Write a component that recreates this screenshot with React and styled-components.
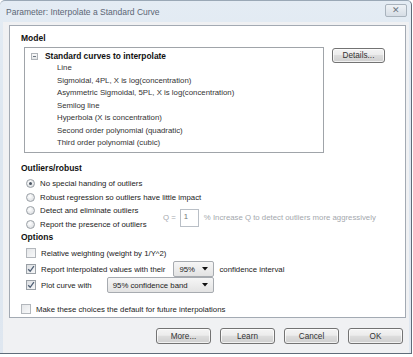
import styled, { createGlobalStyle } from 'styled-components'

const GlobalStyle = createGlobalStyle`
  html, body { margin: 0; padding: 0; background: #ffffff; }
  body { font-family: "Liberation Sans", Arial, sans-serif; }
`

const Window = styled.div`
  width: 412px;
  height: 354px;
  box-sizing: border-box;
  display: flex;
  flex-direction: column;
  background: linear-gradient(180deg, #e4ecf4 0%, #dbe5ef 40%, #dfe7f0 100%);
  border-top: 1px solid #9aa8b6;
  border-right: 1px solid #5f6c79;
  border-bottom: 1px solid #5f6c79;
  border-radius: 5px 5px 0 0;
`

const TitleBar = styled.div`
  height: 21px;
  display: flex;
  align-items: center;
  justify-content: space-between;
  padding: 0 4px 0 6px;
  font-size: 8.5px;
  color: #5b6675;
`

const CloseBtn = styled.div`
  width: 20px;
  height: 11px;
  margin-top: -2px;
  border: 1px solid #a9b3bd;
  border-radius: 2px;
  background: linear-gradient(180deg, #eef2f6, #d6dde5);
  display: flex;
  align-items: center;
  justify-content: center;
  color: #6b7580;
  font-size: 9px;
  line-height: 1;
`

const Client = styled.div`
  flex: 1;
  margin: 0 2px 0 3px;
  padding: 3px 3px 0 6px;
  background: #f0f1f3;
  display: flex;
  flex-direction: column;
`

const Panel = styled.div`
  background: #ffffff;
  border: 1px solid #a3aab3;
  padding: 6px 10px 1px 11px;
  font-size: 7.8px;
  color: #222;
`

const Header = styled.div`
  font-weight: bold;
  font-size: 8.5px;
  height: ${p => p.$h || 13}px;
  line-height: ${p => p.$h || 13}px;
  margin-top: ${p => p.$mt || 0}px;
  color: #111;
`

const ModelRow = styled.div`
  display: flex;
  align-items: flex-start;
  margin: 2px 0 0 3px;
`

const TreeBox = styled.div`
  width: 300px;
  height: 106px;
  box-sizing: border-box;
  border: 1px solid #a0a4a9;
  padding: 2px 0 0 6px;
`

const TreeHead = styled.div`
  display: flex;
  align-items: center;
  gap: 7px;
  height: 12px;
  font-weight: bold;
  font-size: 8.4px;
  color: #111;
`

const Minus = styled.span`
  width: 7px;
  height: 7px;
  box-sizing: border-box;
  border: 1px solid #b0b4b9;
  background: linear-gradient(180deg, #fafafa, #e2e4e6);
  display: flex;
  align-items: center;
  justify-content: center;

  &:after {
    content: '';
    width: 3px;
    height: 1px;
    background: #6c7580;
  }
`

const TreeItem = styled.div`
  height: 12.5px;
  line-height: 12.5px;
  padding-left: 26px;
  color: #333;
`

const WinButton = styled.button`
  width: ${p => p.$w || 55}px;
  height: ${p => p.$h || 16}px;
  margin: ${p => p.$m || 0};
  padding: 0;
  border: 1px solid #737373;
  border-radius: 3px;
  background: linear-gradient(180deg, #f4f4f4 0%, #ececec 45%, #dddddd 50%, #cfcfcf 100%);
  box-shadow: inset 0 0 0 1px rgba(255,255,255,.7);
  font-family: "Liberation Sans", Arial, sans-serif;
  font-size: 8.2px;
  color: #333;
`

const RadioGrid = styled.div`
  display: grid;
  grid-template-columns: 130px auto;
  grid-auto-rows: 13.5px;
  margin: 2px 0 0 5px;
`

const OptLine = styled.label`
  display: flex;
  align-items: center;
  gap: ${p => p.$gap || 5}px;
  white-space: nowrap;
  grid-column: ${p => (p.$wide ? '1 / 3' : 'auto')};
`

const Radio = styled.span`
  width: 7px;
  height: 7px;
  flex: none;
  border-radius: 50%;
  border: 1px solid #9aa0a6;
  background: radial-gradient(circle at 40% 35%, #ffffff, #d3d6da);
  display: flex;
  align-items: center;
  justify-content: center;

  &:after {
    content: '';
    display: ${p => (p.$on ? 'block' : 'none')};
    width: 3px;
    height: 3px;
    border-radius: 50%;
    background: #4a5562;
  }
`

const QGroup = styled.div`
  grid-column: 2;
  grid-row: 3 / 5;
  display: flex;
  align-items: center;
  gap: 3px;
  margin-left: 7px;
  white-space: nowrap;
  color: #a4a8ad;
`

const QBox = styled.span`
  width: 19px;
  height: 18px;
  box-sizing: border-box;
  border: 1px solid #b9bfc6;
  background: #fff;
  color: #777;
  padding: 2px 0 0 3px;
  margin: 0 2px 0 1px;
`

const CheckRows = styled.div`
  display: flex;
  flex-direction: column;
  margin: 2px 0 0 5px;
`

const CheckLine = styled.label`
  display: flex;
  align-items: center;
  height: 16px;
  white-space: nowrap;
  gap: 4px;
`

const Box = styled.span`
  width: 10px;
  height: 10px;
  flex: none;
  box-sizing: border-box;
  border: 1px solid #9aa0a6;
  background: linear-gradient(135deg, #dcdfe2, #f6f7f8);
  opacity: ${p => (p.$dim ? 0.75 : 1)};
  display: flex;
  align-items: center;
  justify-content: center;
  margin-right: 1px;
`

const Select = styled.div`
  width: ${p => p.$w}px;
  height: 16px;
  box-sizing: border-box;
  margin-left: ${p => p.$ml || 0}px;
  border: 1px solid #a7abb0;
  border-radius: 2px;
  background: linear-gradient(180deg, #f6f6f6, #e3e3e3);
  display: flex;
  align-items: center;
  justify-content: space-between;
  padding: 0 5px 0 5px;
  color: #222;
`

const Tail = styled.span`
  margin-left: ${p => p.$ml || 0}px;
`

const DefaultLine = styled.label`
  display: flex;
  align-items: center;
  height: 14px;
  gap: 4px;
  margin-top: 9px;
  white-space: nowrap;
`

const ButtonRow = styled.div`
  display: flex;
  justify-content: flex-end;
  gap: 9px;
  margin-top: 10px;
  padding-right: 3px;
`

const Check = ({ on, dim }) => (
  <Box $dim={dim}>
    {on && (
      <svg width="8" height="8" viewBox="0 0 8 8">
        <path d="M1.2 4.2 L3.2 6.3 L6.9 1.2" fill="none" stroke="#4f5f74" strokeWidth="1.3" />
      </svg>
    )}
  </Box>
)

const Arrow = () => (
  <svg width="6" height="4" viewBox="0 0 6 4">
    <path d="M0 0 H6 L3 3.5 Z" fill="#111" />
  </svg>
)

const curves = [
  'Line',
  'Sigmoidal, 4PL, X is log(concentration)',
  'Asymmetric Sigmoidal, 5PL, X is log(concentration)',
  'Semilog line',
  'Hyperbola (X is concentration)',
  'Second order polynomial (quadratic)',
  'Third order polynomial  (cubic)',
]

export default function App() {
  return (
    <>
      <GlobalStyle />
      <Window>
        <TitleBar>
          <span>Parameter: Interpolate a Standard Curve</span>
          <CloseBtn>✕</CloseBtn>
        </TitleBar>
        <Client>
          <Panel>
            <Header>Model</Header>
            <ModelRow>
              <TreeBox>
                <TreeHead>
                  <Minus />
                  Standard curves to interpolate
                </TreeHead>
                {curves.map(c => (
                  <TreeItem key={c}>{c}</TreeItem>
                ))}
              </TreeBox>
              <WinButton $w={53} $h={15} $m="1px 0 0 8px">Details...</WinButton>
            </ModelRow>

            <Header $mt={9}>Outliers/robust</Header>
            <RadioGrid>
              <OptLine $wide><Radio $on />No special handing of outliers</OptLine>
              <OptLine $wide><Radio />Robust regression so outliers have little impact</OptLine>
              <OptLine><Radio />Detect and eliminate outliers</OptLine>
              <QGroup>
                Q =<QBox>1</QBox>% Increase Q to detect outliers more aggressively
              </QGroup>
              <OptLine><Radio />Report the presence of outliers</OptLine>
            </RadioGrid>

            <Header $h={12}>Options</Header>
            <CheckRows>
              <CheckLine><Check dim />Relative weighting (weight by 1/Y^2)</CheckLine>
              <CheckLine>
                <Check on />Report interpolated values with their
                <Select $w={41} $ml={4}>95%<Arrow /></Select>
                <Tail $ml={1}>confidence interval</Tail>
              </CheckLine>
              <CheckLine>
                <Check on />Plot curve with
                <Select $w={107} $ml={11}>95% confidence band<Arrow /></Select>
              </CheckLine>
            </CheckRows>

            <DefaultLine>
              <Check dim />Make these choices the default for future interpolations
            </DefaultLine>
          </Panel>

          <ButtonRow>
            <WinButton>More...</WinButton>
            <WinButton>Learn</WinButton>
            <WinButton>Cancel</WinButton>
            <WinButton>OK</WinButton>
          </ButtonRow>
        </Client>
      </Window>
    </>
  )
}
